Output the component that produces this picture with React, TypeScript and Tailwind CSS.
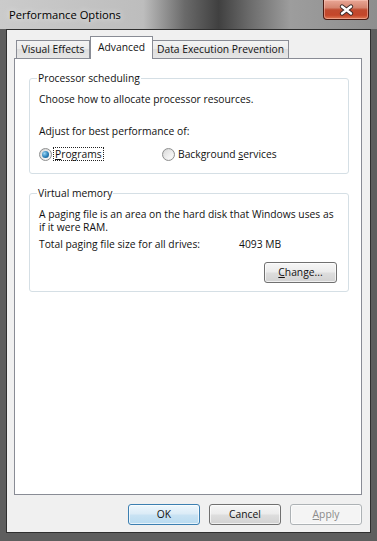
import React from "react";

function Radio({ checked }: { checked?: boolean }) {
  return (
    <span className="w-[13px] h-[13px] shrink-0 rounded-full border border-[#8e8f8f] bg-[linear-gradient(135deg,#d4d4d4,#f9f9f9)] flex items-center justify-center">
      <span className="w-[9px] h-[9px] rounded-full bg-[linear-gradient(135deg,#dcdcdc,#fdfdfd)] flex items-center justify-center">
        {checked && (
          <span className="w-[7px] h-[7px] rounded-full bg-[radial-gradient(circle_at_35%_35%,#9ad6f5,#2a7fb8_55%,#0f4f80)]" />
        )}
      </span>
    </span>
  );
}

type BtnKind = "normal" | "default" | "disabled";

function Btn({ kind = "normal", children, w = "w-[72px]" }: { kind?: BtnKind; children: React.ReactNode; w?: string }) {
  const styles: Record<BtnKind, string> = {
    normal:
      "border-[#707070] bg-[linear-gradient(#f6f6f6,#ececec_45%,#dddddd_55%,#d2d2d2)] text-[#111]",
    default:
      "border-[#3c7fb1] bg-[linear-gradient(#eef7fd,#dcecf7_45%,#c8e2f3_55%,#b9dbf0)] text-[#111]",
    disabled: "border-[#adb2b5] bg-[#f4f4f4] text-[#8a8a8a]",
  };
  return (
    <button
      className={`${w} h-[21px] rounded-[3px] border flex items-center justify-center shadow-[inset_0_0_0_1px_rgba(255,255,255,0.65)] ${styles[kind]}`}
    >
      {children}
    </button>
  );
}

export default function App() {
  return (
    <div className="w-[377px] h-[541px] flex flex-col bg-[#5e5e5e] font-['Open_Sans',sans-serif] text-[10.3px] leading-[13px] text-[#111]">
      {/* title bar */}
      <div className="relative h-[29px] shrink-0 flex items-start bg-[linear-gradient(90deg,#cbcbcb_0%,#bdbdbd_38%,#6a6a6a_49%,#404040_58%,#6a6a6a_66%,#9d9d9d_77%,#8e8e8e_100%)]">
        <span className="ml-[9px] mt-[8px] text-[11.2px] leading-[14px] text-black [text-shadow:0_0_6px_rgba(255,255,255,0.9)]">
          Performance Options
        </span>
        <div className="absolute right-[8px] top-0 w-[46px] h-[20px] rounded-b-[4px] border border-t-0 border-[#4a1a12] bg-[linear-gradient(#e9a796,#d58570_40%,#c04a2f_52%,#c4462a_80%,#df7a55)] shadow-[inset_0_0_0_1px_rgba(255,210,200,0.45)] flex items-center justify-center">
          <svg width="15" height="12" viewBox="0 0 15 12">
            <path d="M3 2.5 L12 9.5 M12 2.5 L3 9.5" stroke="#3a2a28" strokeWidth="4.2" strokeLinecap="round" />
            <path d="M3 2.5 L12 9.5 M12 2.5 L3 9.5" stroke="#ffffff" strokeWidth="2.4" strokeLinecap="round" />
          </svg>
        </div>
      </div>

      {/* client area */}
      <div className="flex-1 flex flex-col mx-[6px] mb-[8px] border border-[#2f2f2f] bg-[#f0f0f0] pl-[7px] pr-[8px] pt-[6px]">
        <div className="h-[22px] flex items-end pl-[2px]">
          <div className="w-[74px] h-[18px] border border-b-0 border-[#898c95] bg-[linear-gradient(#f3f3f3,#ebebeb_50%,#dedede_50%,#e6e6e6)] flex items-center justify-center">
            Visual Effects
          </div>
          <div className="relative z-10 w-[63px] h-[23px] -mb-px border border-b-0 border-[#898c95] bg-white flex items-center justify-center pb-[2px]">
            Advanced
          </div>
          <div className="w-[136px] h-[18px] border border-b-0 border-l-0 border-[#898c95] bg-[linear-gradient(#f3f3f3,#ebebeb_50%,#dedede_50%,#e6e6e6)] flex items-center justify-center">
            Data Execution Prevention
          </div>
        </div>

        <div className="flex-1 border border-[#898c95] bg-white pt-[13px]">
          <fieldset className="ml-[14px] mr-[12px] border border-[#d5dfe5] rounded-[3px] px-[9px] pb-[12px]">
            <legend className="-ml-[2px] px-[1px]">Processor scheduling</legend>
            <p className="mt-[8px]">Choose how to allocate processor resources.</p>
            <p className="mt-[19px]">Adjust for best performance of:</p>
            <div className="mt-[9px] flex items-center">
              <div className="w-[123px] flex items-center">
                <Radio checked />
                <span className="ml-[1px] border border-dotted border-[#222] px-[1px] leading-[12px]">
                  <span className="underline">P</span>rograms
                </span>
              </div>
              <div className="flex items-center">
                <Radio />
                <span className="ml-[3px]">
                  Background <span className="underline">s</span>ervices
                </span>
              </div>
            </div>
          </fieldset>

          <fieldset className="mt-[13px] ml-[14px] mr-[12px] border border-[#d5dfe5] rounded-[3px] px-[9px] pb-[8px]">
            <legend className="-ml-[2px] px-[1px]">Virtual memory</legend>
            <p className="mt-[8px] whitespace-nowrap">
              A paging file is an area on the hard disk that Windows uses as
              <br />
              if it were RAM.
            </p>
            <div className="mt-[4px] flex">
              <span className="w-[200px]">Total paging file size for all drives:</span>
              <span>4093 MB</span>
            </div>
            <div className="mt-[11px] flex justify-end pr-[2px]">
              <Btn w="w-[73px]">
                <span>
                  <span className="underline">C</span>hange...
                </span>
              </Btn>
            </div>
          </fieldset>
        </div>

        <div className="h-[21px] mt-[9px] mb-[7px] flex justify-end gap-[9px]">
          <Btn kind="default">OK</Btn>
          <Btn>Cancel</Btn>
          <Btn kind="disabled">
            <span>
              <span className="underline">A</span>pply
            </span>
          </Btn>
        </div>
      </div>
    </div>
  );
}
